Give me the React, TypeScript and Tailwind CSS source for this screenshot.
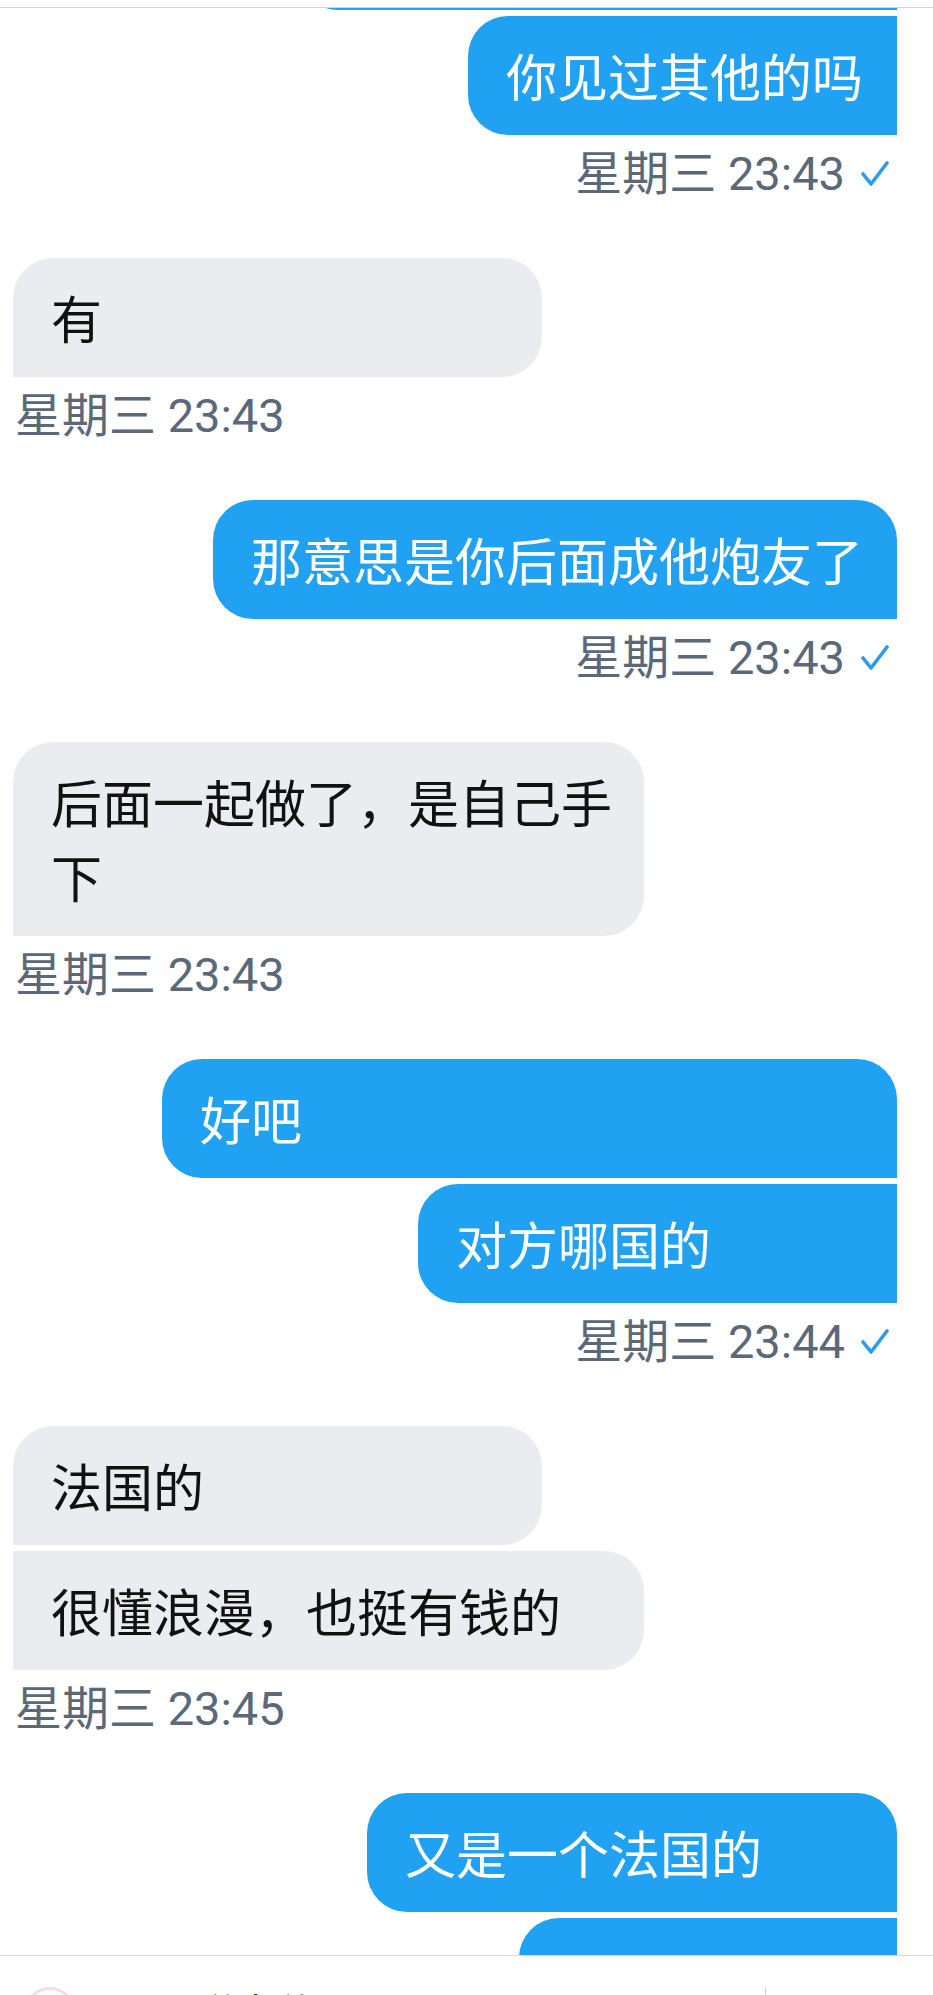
import type { ReactNode } from "react";

type Side = "in" | "out";

type Bubble = {
  text: string;
  width: string;
  first?: boolean;
};

type Group = {
  side: Side;
  time: string;
  bubbles: Bubble[];
};

const cjk = "font-['Noto_Sans_CJK_SC','Noto_Sans',sans-serif]";
const timeFont = "font-['Roboto','Noto_Sans_CJK_SC',sans-serif]";

const groups: Group[] = [
  {
    side: "out",
    time: "星期三 23:43",
    bubbles: [{ text: "你见过其他的吗", width: "w-[429px]" }],
  },
  {
    side: "in",
    time: "星期三 23:43",
    bubbles: [{ text: "有", width: "w-[529px]", first: true }],
  },
  {
    side: "out",
    time: "星期三 23:43",
    bubbles: [{ text: "那意思是你后面成他炮友了", width: "w-[684px]", first: true }],
  },
  {
    side: "in",
    time: "星期三 23:43",
    bubbles: [{ text: "后面一起做了，是自己手下", width: "w-[631px]", first: true }],
  },
  {
    side: "out",
    time: "星期三 23:44",
    bubbles: [
      { text: "好吧", width: "w-[735px]", first: true },
      { text: "对方哪国的", width: "w-[479px]" },
    ],
  },
  {
    side: "in",
    time: "星期三 23:45",
    bubbles: [
      { text: "法国的", width: "w-[529px]", first: true },
      { text: "很懂浪漫，也挺有钱的", width: "w-[631px]" },
    ],
  },
];

function Check() {
  return (
    <svg width="28" height="28" viewBox="0 0 28 28" fill="none" aria-hidden>
      <polyline
        points="2,14 10,24 26,3"
        stroke="#2a9bef"
        strokeWidth="3.6"
        strokeLinecap="round"
        strokeLinejoin="round"
      />
    </svg>
  );
}

function MessageBubble({ side, bubble, className = "" }: { side: Side; bubble: Bubble; className?: string }) {
  const shape =
    side === "out"
      ? `self-end rounded-l-[40px] bg-[#21a1f2] text-white ${bubble.first ? "rounded-tr-[40px]" : ""}`
      : `self-start rounded-r-[40px] bg-[#ebecf0] text-[#111111] ${bubble.first ? "rounded-tl-[40px]" : ""}`;
  return (
    <div
      className={`${shape} ${bubble.width} ${cjk} min-h-[119px] shrink-0 py-[22px] pl-[38px] pr-[30px] text-[51px] leading-[75px] ${className}`}
    >
      {bubble.text}
    </div>
  );
}

function Timestamp({ side, children }: { side: Side; children: ReactNode }) {
  if (side === "out") {
    return (
      <div className={`${timeFont} mt-[14px] flex h-[50px] shrink-0 items-center justify-end gap-[16px] pr-[8px] text-[47px] leading-[50px] text-[#5b6879]`}>
        <span>{children}</span>
        <Check />
      </div>
    );
  }
  return (
    <div className={`${timeFont} mt-[14px] flex h-[50px] shrink-0 items-center pl-[2px] text-[47px] leading-[50px] text-[#5b6879]`}>
      <span>{children}</span>
    </div>
  );
}

export default function App() {
  return (
    <div className="flex h-[1995px] w-[933px] flex-col overflow-hidden bg-white">
      <header className="relative z-10 h-[8px] shrink-0 border-b border-[#d6d6d6] bg-white" />

      <main className="flex min-h-0 flex-1 flex-col overflow-hidden pl-[13px] pr-[36px]">
        {/* bottom edge of the previous outgoing message, scrolled out of view */}
        <div className="-mt-[111px] h-[113px] w-[599px] shrink-0 self-end rounded-l-[40px] rounded-tr-[40px] bg-[#21a1f2]" />

        {groups.map((group, gi) => (
          <section key={gi} className={`flex shrink-0 flex-col ${gi === 0 ? "mt-[6px]" : "mt-[59px]"}`}>
            {group.bubbles.map((bubble, bi) => (
              <MessageBubble key={bi} side={group.side} bubble={bubble} className={bi > 0 ? "mt-[6px]" : ""} />
            ))}
            <Timestamp side={group.side}>{group.time}</Timestamp>
          </section>
        ))}

        <section className="mt-[59px] flex shrink-0 flex-col">
          <MessageBubble side="out" bubble={{ text: "又是一个法国的", width: "w-[530px]", first: true }} />
          <MessageBubble side="out" bubble={{ text: "还说自己很懂", width: "w-[378px]" }} className="mt-[6px]" />
        </section>
      </main>

      <footer className="flex h-[40px] shrink-0 items-start border-t border-[#d6d6d6] bg-white pl-[24px] pt-[31px]">
        <div className="h-[52px] w-[52px] shrink-0 rounded-full border-[3px] border-[#f4dde2]" />
        <span className={`${cjk} ml-[120px] text-[40px] leading-[48px] text-[#333333]`}>说点什么吧</span>
        <div className="ml-auto mr-[167px] h-[40px] w-px bg-[#cccccc]" />
      </footer>
    </div>
  );
}
